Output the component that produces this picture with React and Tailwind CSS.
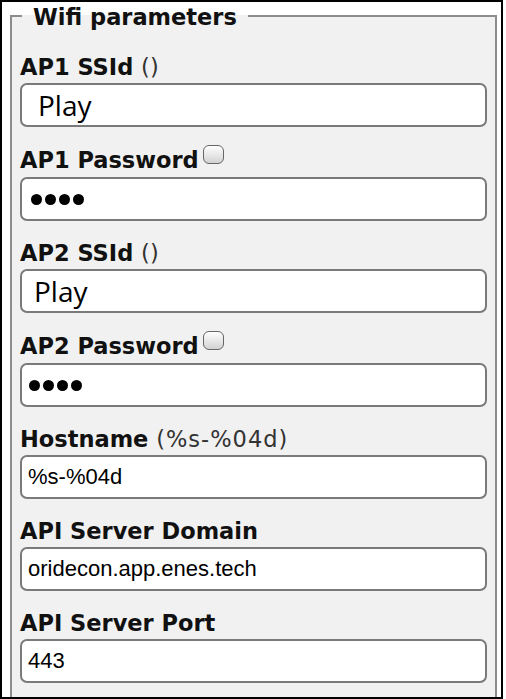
import React from "react";

// --- boxes ---
const TextBox = ({ value, big = false, pad = "pl-[6px]" }) => (
  <input
    readOnly
    value={value}
    className={`block w-full h-[44px] rounded-[7px] border-2 border-[#7a7a7a] bg-white text-black outline-none ${pad} ${
      big ? "text-[28px] font-['Open_Sans',sans-serif]" : "text-[22px] font-['Liberation_Sans',Arial,sans-serif] text-[#1a1a1a]"
    }`}
  />
);

const Dots = ({ pad = "pl-[9px]" }) => (
  <div className={`flex h-[44px] w-full items-center gap-[3px] rounded-[7px] border-2 border-[#7a7a7a] bg-white ${pad}`}>
    {[0, 1, 2, 3].map((i) => (
      <span key={i} className="h-[11px] w-[11px] rounded-full bg-black" />
    ))}
  </div>
);

const Check = () => (
  <span className="ml-[4px] inline-block h-[19px] w-[21px] rounded-[6px] border border-[#666] bg-linear-to-b from-white to-[#d2d2d2] align-[4px]" />
);

const Label = ({ children, tall = false }) => (
  <div className={`mb-[2px] text-[22.5px] font-bold ${tall ? "leading-[30px]" : "leading-[28px]"}`}>{children}</div>
);

const Hint = ({ children, wide = false }) => (
  <span className={`font-normal text-[#333] ${wide ? "tracking-[1px]" : ""}`}>{children}</span>
);

export default function App() {
  return (
    <div className="h-[699px] w-[503px] overflow-hidden border-2 border-black bg-white font-['DejaVu_Sans',Verdana,sans-serif] text-[#111]">
      <fieldset className="ml-2 mr-1 border-2 border-[#8d8d8d] bg-[#f1f1f1] px-2 pb-6 pt-[24px]">
        <legend className="ml-[2px] px-[11px] pt-[3px] text-[22.5px] font-bold leading-[24px]">Wifi parameters</legend>

        <Label>
          AP1 SSId <Hint>()</Hint>
        </Label>
        <TextBox value="Play" big pad="pl-[16px]" />

        <div className="mt-[18px]">
          <Label tall>
            AP1 Password<Check />
          </Label>
          <Dots pad="pl-[9px]" />
        </div>

        <div className="mt-[18px]">
          <Label>
            AP2 SSId <Hint>()</Hint>
          </Label>
          <TextBox value="Play" big pad="pl-[12px]" />
        </div>

        <div className="mt-[18px]">
          <Label tall>
            AP2 Password<Check />
          </Label>
          <Dots pad="pl-[7px]" />
        </div>

        <div className="mt-[18px]">
          <Label>
            Hostname <Hint wide>(%s-%04d)</Hint>
          </Label>
          <TextBox value="%s-%04d" />
        </div>

        <div className="mt-[18px]">
          <Label>API Server Domain</Label>
          <TextBox value="oridecon.app.enes.tech" />
        </div>

        <div className="mt-[18px]">
          <Label>API Server Port</Label>
          <TextBox value="443" />
        </div>
      </fieldset>
    </div>
  );
}
